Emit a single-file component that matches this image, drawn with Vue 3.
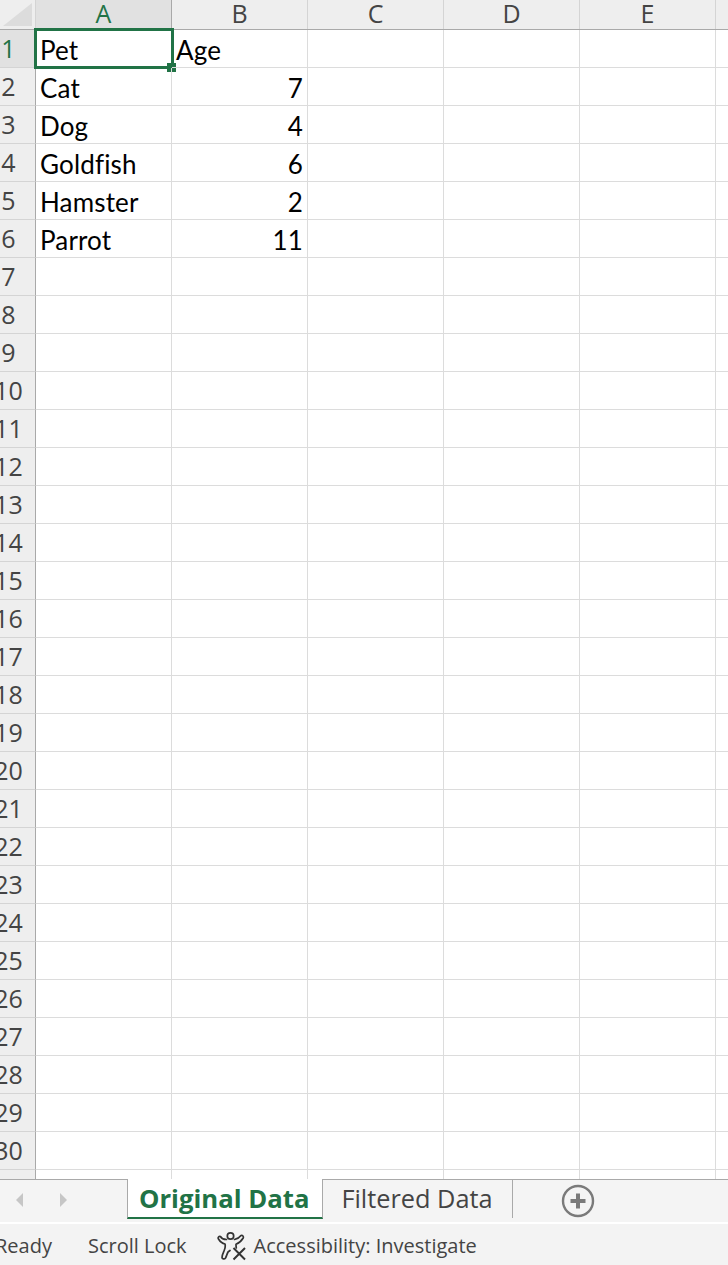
<template>
  <div class="sheet-app">
    <div class="grid-area">
      <div class="col-headers">
        <div class="corner"><span class="corner-tri"></span></div>
        <div
          v-for="col in columns"
          :key="col"
          class="col-head"
          :class="{ active: col === 'A' }"
        >{{ col }}</div>
        <div class="col-rest"></div>
      </div>

      <div v-for="row in rows" :key="row.num" class="row">
        <div class="row-head" :class="{ active: row.num === 1 }"><span>{{ row.num }}</span></div>
        <div class="cell text">
          {{ row.a }}
          <template v-if="row.num === 1">
            <span class="selection"></span>
            <span class="fill-handle"></span>
          </template>
        </div>
        <div class="cell" :class="row.num === 1 ? 'text age' : 'num'">{{ row.b }}</div>
        <div class="cell"></div>
        <div class="cell"></div>
        <div class="cell"></div>
        <div class="cell rest"></div>
      </div>
      <div class="row partial">
        <div class="row-head"></div>
        <div class="cell"></div>
        <div class="cell"></div>
        <div class="cell"></div>
        <div class="cell"></div>
        <div class="cell"></div>
        <div class="cell rest"></div>
      </div>
    </div>

    <div class="tab-bar">
      <div class="nav-arrows">
        <svg width="10" height="16" viewBox="0 0 10 16"><path d="M8 1 1 8l7 7z" fill="#c6c6c6" /></svg>
        <svg width="10" height="16" viewBox="0 0 10 16"><path d="M2 1l7 7-7 7z" fill="#c6c6c6" /></svg>
      </div>
      <div class="tab current">Original Data</div>
      <div class="tab">Filtered Data</div>
      <div class="add-sheet">
        <svg width="34" height="34" viewBox="0 0 34 34">
          <circle cx="17" cy="17" r="15" fill="none" stroke="#7a7a7a" stroke-width="2.4" />
          <path d="M17 9.5v15M9.5 17h15" stroke="#7a7a7a" stroke-width="4" />
        </svg>
      </div>
    </div>

    <div class="status-bar">
      <span class="ready">Ready</span>
      <span class="scroll-lock">Scroll Lock</span>
      <svg class="a11y-icon" width="30" height="30" viewBox="0 0 30 30" fill="none" stroke="#333" stroke-width="1.7" stroke-linejoin="round" stroke-linecap="round">
        <circle cx="13.500" cy="5" r="3.200" />
        <path d="M9.500 8.500C7 8.500 4.500 7.500 3.500 5.500 2 5 .5 6.500 1.500 8c1.500 2.500 4 4.500 6.500 5 .5 2 .3 4-.8 6.500-1 2.300-2.200 4.500-2.200 7 0 1.500 2.500 2 3.500.5 1-1.800 1.500-4 2.500-6l2-1.500" />
        <path d="M17.500 8.500c2.500-.5 5-2 6.500-4 1.500-.5 3 1 2.200 2.500-1.500 2.500-4 5-7.200 6.200 0 1.500 0 2.500.3 3.800" />
        <path d="M16.500 17 28 28.500M28 17 16.500 28.500" stroke-width="2" stroke-linecap="butt" />
      </svg>
      <span class="a11y-text">Accessibility: Investigate</span>
    </div>
  </div>
</template>

<script setup>
const columns = ['A', 'B', 'C', 'D', 'E']

const pets = [
  ['Pet', 'Age'],
  ['Cat', 7],
  ['Dog', 4],
  ['Goldfish', 6],
  ['Hamster', 2],
  ['Parrot', 11]
]

const rows = Array.from({ length: 30 }, (_, i) => ({
  num: i + 1,
  a: pets[i] ? pets[i][0] : '',
  b: pets[i] ? pets[i][1] : ''
}))
</script>

<style>
html, body {
  margin: 0;
  background: #fff;
  overflow: hidden;
}
</style>

<style scoped>
.sheet-app {
  width: 728px;
  height: 1265px;
  display: flex;
  flex-direction: column;
  overflow: hidden;
  font-family: "Open Sans", sans-serif;
  background: #fff;
}

.grid-area {
  height: 1179px;
  overflow: hidden;
  flex: none;
}

.col-headers,
.row {
  display: grid;
  grid-template-columns: 36px repeat(5, 136px) 12px;
}

.col-headers {
  height: 30px;
  box-sizing: border-box;
  background: #eeeeee;
  border-bottom: 1px solid #a9a9a9;
}

.corner {
  position: relative;
  border-right: 1px solid #d4d4d4;
}

.corner-tri {
  position: absolute;
  left: 3px;
  top: 3px;
  width: 0;
  height: 0;
  border-style: solid;
  border-width: 0 0 23px 29px;
  border-color: transparent transparent #dcdcdc transparent;
}

.col-head {
  border-right: 1px solid #d4d4d4;
  color: #444;
  font-size: 25px;
  line-height: 26px;
  text-align: center;
}

.col-head.active {
  background: #e1e1e1;
  color: #217346;
  border-right-color: #a9a9a9;
}

.row {
  height: 38px;
}

.row.partial {
  height: 10px;
}

.row-head {
  box-sizing: border-box;
  background: #eeeeee;
  border-right: 1px solid #a9a9a9;
  border-bottom: 1px solid #d4d4d4;
  padding-right: 18px;
  display: flex;
  align-items: center;
  justify-content: center;
  color: #444;
  font-size: 25px;
  line-height: 37px;
  white-space: nowrap;
}

.partial .row-head {
  border-bottom: none;
}

.row-head.active {
  background: #e1e1e1;
  color: #217346;
}

.cell {
  position: relative;
  box-sizing: border-box;
  border-right: 1px solid #dcdcdc;
  border-bottom: 1px solid #dcdcdc;
  padding-top: 4px;
  font-family: Lato, sans-serif;
  font-size: 26px;
  font-variant-ligatures: none;
  letter-spacing: 0.15px;
  line-height: 33px;
  color: #000;
  white-space: nowrap;
}

.partial .cell {
  border-bottom: none;
  padding-top: 0;
  line-height: 10px;
}

.cell.rest {
  border-right: none;
}

.cell.text {
  padding-left: 4px;
}

.cell.age {
  padding-left: 4px;
}

.cell.num {
  text-align: right;
  padding-right: 4px;
}

.selection {
  position: absolute;
  left: -2px;
  top: -2px;
  width: 140px;
  height: 41px;
  box-sizing: border-box;
  border: 3px solid #217346;
}

.fill-handle {
  position: absolute;
  left: 131px;
  top: 33px;
  width: 9px;
  height: 9px;
  background: #217346;
}

.tab-bar {
  height: 43px;
  flex: none;
  box-sizing: border-box;
  background: #f4f4f4;
  border-top: 1px solid #a9a9a9;
  display: flex;
  align-items: stretch;
}

.nav-arrows {
  width: 127px;
  flex: none;
  box-sizing: border-box;
  padding: 12px 0 0 15px;
  display: flex;
  gap: 33px;
  align-items: flex-start;
}

.tab {
  box-sizing: border-box;
  height: 38px;
  padding: 0 19px 0 18px;
  font-size: 25.3px;
  line-height: 37px;
  color: #444;
  border-right: 1px solid #a9a9a9;
  white-space: nowrap;
}

.tab.current {
  margin-top: -1px;
  height: 40px;
  padding: 0 13px 0 11px;
  background: #fff;
  color: #217346;
  font-size: 25.7px;
  font-weight: 700;
  border-left: 1px solid #a9a9a9;
  border-right: 1px solid #a9a9a9;
  border-bottom: 2px solid #217346;
  line-height: 40px;
}

.add-sheet {
  margin-left: 48px;
  padding-top: 4px;
}

.status-bar {
  margin-top: 2px;
  padding-top: 2px;
  box-sizing: border-box;
  flex: 1;
  background: #f3f3f3;
  display: flex;
  align-items: center;
  font-size: 20px;
  color: #444;
  white-space: nowrap;
}

.ready {
  margin-left: -5px;
}

.scroll-lock {
  margin-left: 36px;
}

.a11y-icon {
  margin-left: 30px;
  flex: none;
}

.a11y-text {
  margin-left: 7px;
}
</style>
